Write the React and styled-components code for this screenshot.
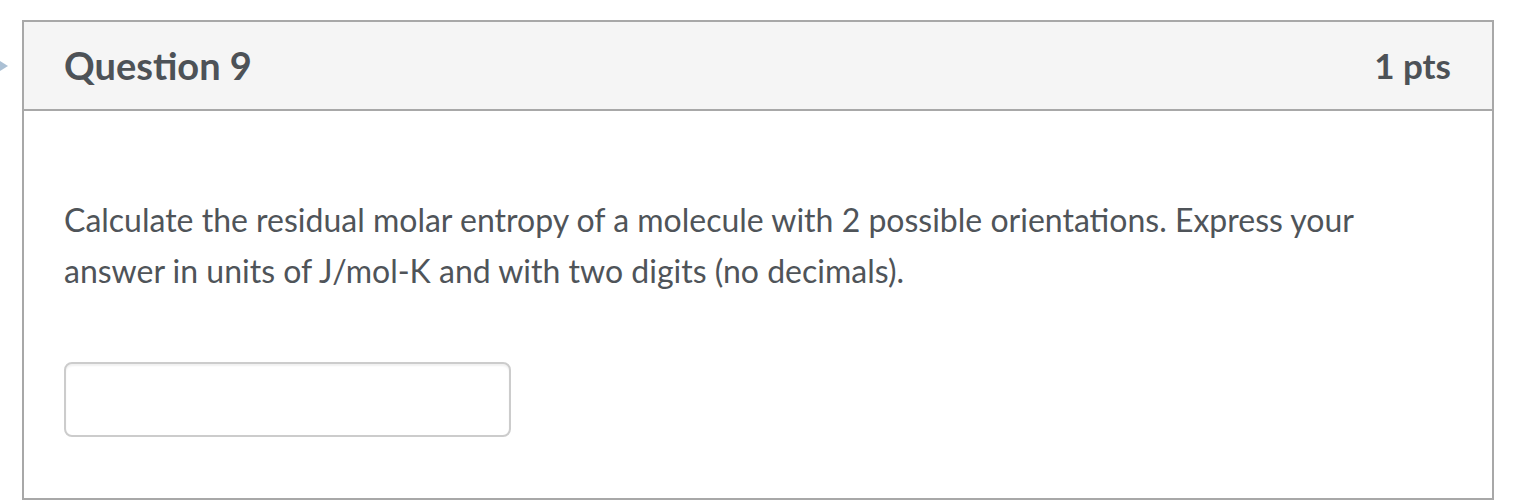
import React from 'react';
import styled, { createGlobalStyle } from 'styled-components';

const GlobalStyle = createGlobalStyle`
    html, body {
        margin: 0;
        padding: 0;
        background: #fff;
    }
    body {
        font-family: Lato, 'Open Sans', sans-serif;
        color: #4d5257;
    }
`;

const Page = styled.div`
    display: flex;
    align-items: flex-start;
    padding-top: 20px;
    height: 502px;
    box-sizing: border-box;
    overflow: hidden;
`;

const Gutter = styled.div`
    width: 22px;
    height: 100%;
    overflow: hidden;
    display: flex;
    justify-content: flex-start;
    padding-top: 35px;
    box-sizing: border-box;
`;

const Card = styled.div`
    width: 1472px;
    height: 480px;
    box-sizing: border-box;
    border: 2px solid #a8a8a8;
    display: flex;
    flex-direction: column;
`;

const Header = styled.div`
    height: 89px;
    box-sizing: border-box;
    background: #f5f5f5;
    border-bottom: 2px solid #a8a8a8;
    display: flex;
    align-items: center;
    justify-content: space-between;
    padding: 0 41px 2px 40px;
`;

const Title = styled.h2`
    margin: 0;
    font-size: 38px;
    font-weight: 700;
    color: #4d5257;
`;

const Points = styled.div`
    font-size: 35px;
    font-weight: 700;
    color: #4d5257;
`;

const Body = styled.div`
    padding: 83px 40px 0 40px;
`;

const Text = styled.p`
    margin: 0;
    max-width: 1340px;
    font-size: 32px;
    line-height: 51px;
    color: #4f5459;
`;

const Answer = styled.input`
    display: block;
    margin-top: 66px;
    width: 447px;
    height: 75px;
    box-sizing: border-box;
    border: 2px solid #cccccc;
    border-radius: 8px;
    box-shadow: inset 0 2px 2px rgba(0, 0, 0, 0.06);
    background: #fff;
    outline: none;
`;

const Marker = () => (
    <svg width="12" height="22" viewBox="0 0 12 22">
        <path d="M-8 1 L8 11 L-8 21 Z" fill="#8fabc6" opacity="0.75" />
    </svg>
);

export default function App() {
    return (
        <>
            <GlobalStyle />
            <Page>
                <Gutter>
                    <Marker />
                </Gutter>
                <Card>
                    <Header>
                        <Title>Question 9</Title>
                        <Points>1 pts</Points>
                    </Header>
                    <Body>
                        <Text>
                            Calculate the residual molar entropy of a molecule with 2 possible orientations. Express your
                            answer in units of J/mol-K and with two digits (no decimals).
                        </Text>
                        <Answer type="text" />
                    </Body>
                </Card>
            </Page>
        </>
    );
}
